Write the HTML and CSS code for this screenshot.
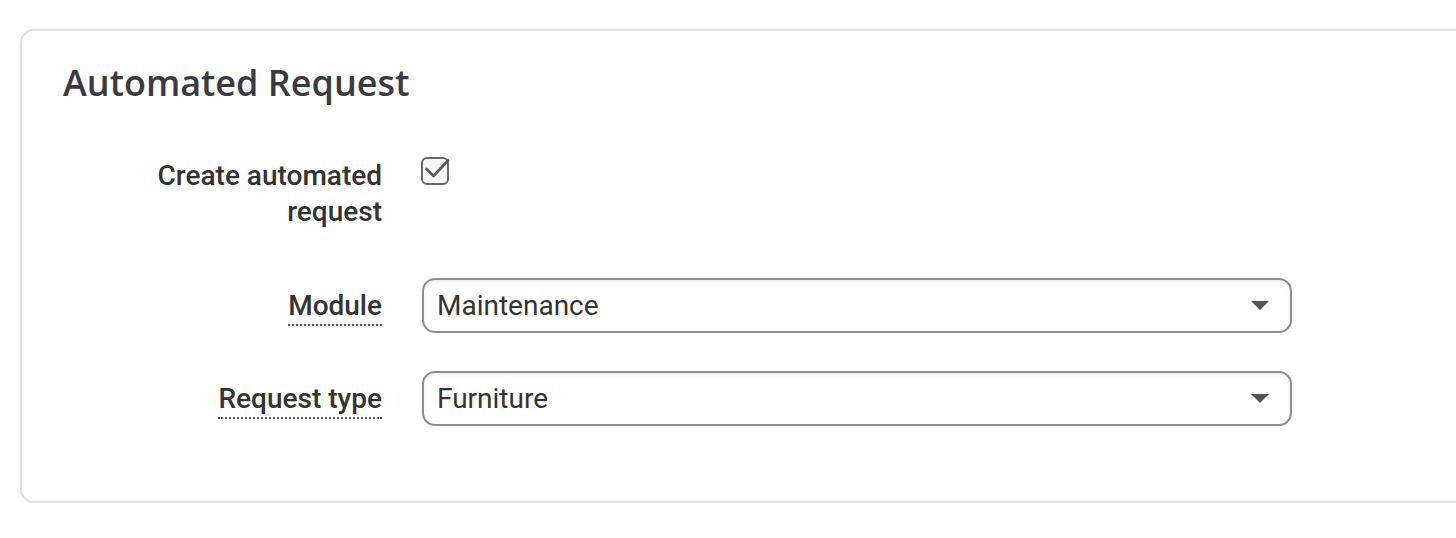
FILE: index.html
```html
<!DOCTYPE html>
<html lang="en">
<head>
  <meta charset="UTF-8" />
  <title>Automated Request</title>
  <link rel="stylesheet" href="styles.css">
</head>
<body>
  <div class="card">
    <h2>Automated Request</h2>

    <div class="form">
      <div class="row row-check">
        <label class="label" for="autoReq">Create automated request</label>
        <div class="control">
          <span class="checkbox" id="autoReq">
            <svg class="tick" width="30" height="30" viewBox="0 0 30 30">
              <path d="M5.5 12 L12.5 19 L27 3.5" fill="none" stroke="#5a5a5a" stroke-width="2.6" stroke-linecap="round" stroke-linejoin="round"/>
            </svg>
          </span>
        </div>
      </div>

      <div class="row">
        <label class="label"><span class="hint">Module</span></label>
        <div class="control">
          <div class="select">
            <span class="value">Maintenance</span>
            <span class="caret"></span>
          </div>
        </div>
      </div>

      <div class="row">
        <label class="label"><span class="hint">Request type</span></label>
        <div class="control">
          <div class="select">
            <span class="value">Furniture</span>
            <span class="caret"></span>
          </div>
        </div>
      </div>
    </div>
  </div>
</body>
</html>
```

FILE: styles.css
```css
body {
  margin: 0;
  background-color: #fff;
  font-family: Roboto, "Liberation Sans", sans-serif;
  color: #333;
}

.card {
  margin: 29px 0 0 20px;
  width: 1460px;
  height: 474px;
  box-sizing: border-box;
  border: 2px solid #dedede;
  border-radius: 14px;
  padding: 22px 0 0 41px;
}

h2 {
  margin: 0;
  font-family: "Open Sans", sans-serif;
  font-weight: 600;
  font-size: 36px;
  line-height: 60px;
  color: #3a3a40;
  letter-spacing: 0;
}

.form {
  margin-top: 45px;
  width: 1230px;
}

.row {
  display: grid;
  grid-template-columns: 319px 870px;
  column-gap: 40px;
  align-items: center;
  margin-bottom: 38px;
}

.row-check {
  align-items: start;
  margin-bottom: 48px;
}

.label {
  text-align: right;
  font-size: 28px;
  font-weight: 500;
  line-height: 36px;
  color: #333;
}

.hint {
  border-bottom: 2px dotted #555;
  padding-bottom: 2px;
}

.checkbox {
  position: relative;
  display: block;
  width: 24px;
  height: 24px;
  margin-top: -1px;
  margin-left: -1px;
  border: 2.5px solid #686868;
  border-radius: 6px;
  background-color: #f8f8f8;
}

.tick {
  position: absolute;
  left: -2.5px;
  top: -2.5px;
}

.select {
  position: relative;
  height: 55px;
  box-sizing: border-box;
  border: 2px solid #8a8d91;
  border-radius: 13px;
  box-shadow: inset 0 2px 3px rgba(150, 110, 110, 0.12);
  padding: 0 60px 0 13px;
  display: flex;
  align-items: center;
  font-size: 28px;
  color: #333;
}

.caret {
  position: absolute;
  right: 21px;
  top: 21px;
  width: 0;
  height: 0;
  border-left: 9px solid transparent;
  border-right: 9px solid transparent;
  border-top: 9px solid #555;
}
```
